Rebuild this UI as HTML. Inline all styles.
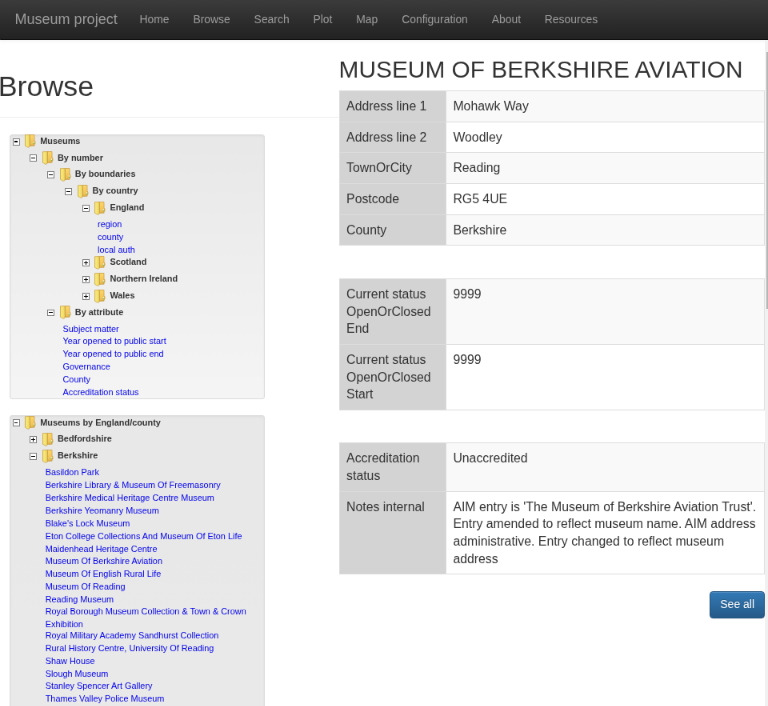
<!DOCTYPE html>
<html>
<head>
<meta charset="utf-8">
<title>Museum project</title>
<style>
*{box-sizing:border-box;}
html,body{margin:0;padding:0;width:768px;height:706px;overflow:hidden;background:#fff;}
body{font-family:"Liberation Sans",sans-serif;color:#333;position:relative;}
#wrap{position:absolute;left:0;top:0;width:960px;height:884px;transform:scale(0.8);transform-origin:0 0;will-change:transform;font-size:14px;line-height:20px;overflow:hidden;}
/* navbar */
#nav{position:absolute;left:-2px;top:-1px;width:964px;height:51px;background:linear-gradient(to bottom,#3c3c3c 0,#222 100%);border-bottom:1px solid #0e0e0e;border-radius:0 0 0 4px;box-shadow:inset 0 1px 0 rgba(255,255,255,.15),0 1px 5px rgba(0,0,0,.075);white-space:nowrap;color:#9d9d9d;}
#nav .brand{position:absolute;left:20.6px;top:15px;font-size:18px;line-height:20px;}
#nav .links{position:absolute;left:161.6px;top:15px;font-size:13.92px;line-height:20px;}
#nav .links span{display:inline-block;padding:0 14.92px;}
/* left */
h1{position:absolute;left:-2.3px;top:89px;margin:0;font-size:35.8px;line-height:39.6px;font-weight:400;color:#333;}
#hr{position:absolute;left:0;top:146.1px;width:424px;height:1px;background:#eee;}
.well{position:absolute;left:12.25px;width:318.75px;background:linear-gradient(to bottom,#e8e8e8 0,#f5f5f5 100%);border:1px solid #dcdcdc;border-radius:3px;box-shadow:inset 0 1px 3px rgba(0,0,0,.05);}
.tree{position:absolute;left:0;top:-3px;width:316px;font-size:10.9px;white-space:nowrap;}
.tree .f{position:relative;height:20.8px;line-height:20.8px;color:#333;}
.tree .f b{position:absolute;top:0;margin-left:34.55px;font-weight:700;}
.tree .f i.e{position:absolute;top:6.9px;width:9px;height:8.9px;border:1.1px solid #7c7c7c;background:#fff;}
.tree .f i.e:before{content:"";position:absolute;left:1px;top:2.75px;width:4.8px;height:1.15px;background:#000;}
.tree .f i.e.p:after{content:"";position:absolute;left:2.8px;top:0.9px;width:1.2px;height:4.9px;background:#000;}
.tree .f .ic{position:absolute;top:2.7px;margin-left:15.55px;width:14px;height:17px;}
.tree .l{height:15.87px;line-height:15.87px;color:#0000ee;}
.tree .l span{position:relative;top:3.1px;display:block;}
#t2{top:-2.4px;}
#t2 .l span{top:3.5px;}
.tree .l.w{height:29.6px;}
.tree .l.w span{line-height:15.9px;margin-top:-0.4px;}
/* right */
h2{position:absolute;left:423.6px;top:69.8px;margin:0;font-size:29.87px;line-height:33px;font-weight:400;color:#333;white-space:nowrap;}
table{position:absolute;left:424.1px;width:531.5px;border-collapse:collapse;font-size:15.84px;line-height:21.65px;table-layout:fixed;}
td{border:1px solid #ddd;padding:8px;vertical-align:top;color:#333;white-space:nowrap;}
td.k{width:133.3px;background:#d3d3d3;}
tr.a td.v{background:#f9f9f9;}
tr.b td.v{background:#fff;}
#btn{position:absolute;left:886.9px;top:738.9px;width:69.6px;height:33.7px;border-radius:4px;border:1px solid #245580;background:linear-gradient(to bottom,#337ab7 0,#265a88 100%);box-shadow:inset 0 1px 0 rgba(255,255,255,.15),0 1px 1px rgba(0,0,0,.075);color:#fff;font-size:14px;line-height:31.7px;text-align:center;text-shadow:0 -1px 0 rgba(0,0,0,.2);}
#sbt{position:absolute;left:765.2px;top:40px;width:3px;height:670px;background:#f1f1f1;}
#sbh{position:absolute;left:765.9px;top:52px;width:2.1px;height:256.5px;background:linear-gradient(to right,#d2d2d2,#adadad);}
</style>
</head>
<body>
<div id="wrap">
  <div id="nav">
    <span class="brand">Museum project</span>
    <div class="links"><span>Home</span><span>Browse</span><span>Search</span><span>Plot</span><span>Map</span><span>Configuration</span><span>About</span><span>Resources</span></div>
  </div>

  <h1>Browse</h1>
  <div id="hr"></div>

  <div class="well" style="top:167.75px;height:331px;"><div class="tree">
<div class="f" style="padding-left:2.4px"><i class="e"></i><svg class="ic" viewBox="0 0 14 17"><use href="#fold"/></svg><b>Museums</b></div>
<div class="f" style="padding-left:24.2px"><i class="e"></i><svg class="ic" viewBox="0 0 14 17"><use href="#fold"/></svg><b>By number</b></div>
<div class="f" style="padding-left:46px"><i class="e"></i><svg class="ic" viewBox="0 0 14 17"><use href="#fold"/></svg><b>By boundaries</b></div>
<div class="f" style="padding-left:67.8px"><i class="e"></i><svg class="ic" viewBox="0 0 14 17"><use href="#fold"/></svg><b>By country</b></div>
<div class="f" style="padding-left:89.6px"><i class="e"></i><svg class="ic" viewBox="0 0 14 17"><use href="#fold"/></svg><b>England</b></div>
<div class="l" style="padding-left:108.85px"><span>region</span></div>
<div class="l" style="padding-left:108.85px"><span>county</span></div>
<div class="l" style="padding-left:108.85px"><span>local auth</span></div>
<div class="f" style="padding-left:89.6px"><i class="e p"></i><svg class="ic" viewBox="0 0 14 17"><use href="#fold"/></svg><b>Scotland</b></div>
<div class="f" style="padding-left:89.6px"><i class="e p"></i><svg class="ic" viewBox="0 0 14 17"><use href="#fold"/></svg><b>Northern Ireland</b></div>
<div class="f" style="padding-left:89.6px"><i class="e p"></i><svg class="ic" viewBox="0 0 14 17"><use href="#fold"/></svg><b>Wales</b></div>
<div class="f" style="padding-left:46px"><i class="e"></i><svg class="ic" viewBox="0 0 14 17"><use href="#fold"/></svg><b>By attribute</b></div>
<div class="l" style="padding-left:65.25px"><span>Subject matter</span></div>
<div class="l" style="padding-left:65.25px"><span>Year opened to public start</span></div>
<div class="l" style="padding-left:65.25px"><span>Year opened to public end</span></div>
<div class="l" style="padding-left:65.25px"><span>Governance</span></div>
<div class="l" style="padding-left:65.25px"><span>County</span></div>
<div class="l" style="padding-left:65.25px"><span>Accreditation status</span></div>
  </div></div>

  <div class="well" style="top:518.9px;height:3200px;"><div class="tree" id="t2">
<div class="f" style="padding-left:2.4px"><i class="e"></i><svg class="ic" viewBox="0 0 14 17"><use href="#fold"/></svg><b>Museums by England/county</b></div>
<div class="f" style="padding-left:24.2px"><i class="e p"></i><svg class="ic" viewBox="0 0 14 17"><use href="#fold"/></svg><b>Bedfordshire</b></div>
<div class="f" style="padding-left:24.2px"><i class="e"></i><svg class="ic" viewBox="0 0 14 17"><use href="#fold"/></svg><b>Berkshire</b></div>
<div class="l" style="padding-left:43.45px"><span>Basildon Park</span></div>
<div class="l" style="padding-left:43.45px"><span>Berkshire Library &amp; Museum Of Freemasonry</span></div>
<div class="l" style="padding-left:43.45px"><span>Berkshire Medical Heritage Centre Museum</span></div>
<div class="l" style="padding-left:43.45px"><span>Berkshire Yeomanry Museum</span></div>
<div class="l" style="padding-left:43.45px"><span>Blake's Lock Museum</span></div>
<div class="l" style="padding-left:43.45px"><span>Eton College Collections And Museum Of Eton Life</span></div>
<div class="l" style="padding-left:43.45px"><span>Maidenhead Heritage Centre</span></div>
<div class="l" style="padding-left:43.45px"><span>Museum Of Berkshire Aviation</span></div>
<div class="l" style="padding-left:43.45px"><span>Museum Of English Rural Life</span></div>
<div class="l" style="padding-left:43.45px"><span>Museum Of Reading</span></div>
<div class="l" style="padding-left:43.45px"><span>Reading Museum</span></div>
<div class="l w" style="padding-left:43.45px"><span>Royal Borough Museum Collection &amp; Town &amp; Crown<br>Exhibition</span></div>
<div class="l" style="padding-left:43.45px"><span>Royal Military Academy Sandhurst Collection</span></div>
<div class="l" style="padding-left:43.45px"><span>Rural History Centre, University Of Reading</span></div>
<div class="l" style="padding-left:43.45px"><span>Shaw House</span></div>
<div class="l" style="padding-left:43.45px"><span>Slough Museum</span></div>
<div class="l" style="padding-left:43.45px"><span>Stanley Spencer Art Gallery</span></div>
<div class="l" style="padding-left:43.45px"><span>Thames Valley Police Museum</span></div>
  </div></div>

  <h2>MUSEUM OF BERKSHIRE AVIATION</h2>

  <table style="top:113.1px">
    <tr class="a"><td class="k">Address line 1</td><td class="v">Mohawk Way</td></tr>
    <tr class="b"><td class="k">Address line 2</td><td class="v">Woodley</td></tr>
    <tr class="a"><td class="k">TownOrCity</td><td class="v">Reading</td></tr>
    <tr class="b"><td class="k">Postcode</td><td class="v">RG5 4UE</td></tr>
    <tr class="a"><td class="k">County</td><td class="v">Berkshire</td></tr>
  </table>

  <table style="top:347.9px">
    <tr class="a"><td class="k">Current status<br>OpenOrClosed<br>End</td><td class="v">9999</td></tr>
    <tr class="b"><td class="k">Current status<br>OpenOrClosed<br>Start</td><td class="v">9999</td></tr>
  </table>

  <table style="top:553.4px">
    <tr class="a"><td class="k">Accreditation<br>status</td><td class="v">Unaccredited</td></tr>
    <tr class="b"><td class="k">Notes internal</td><td class="v">AIM entry is 'The Museum of Berkshire Aviation Trust'.<br>Entry amended to reflect museum name. AIM address<br>administrative. Entry changed to reflect museum<br>address</td></tr>
  </table>

  <div id="btn">See all</div>
</div>
<div id="sbt"></div><div id="sbh"></div>

<svg width="0" height="0" style="position:absolute">
  <defs>
    <linearGradient id="fg1" x1="0" y1="0" x2="1" y2="0"><stop offset="0" stop-color="#d9b348"/><stop offset=".2" stop-color="#f8ec7a"/><stop offset=".75" stop-color="#f0da6a"/><stop offset="1" stop-color="#dcb952"/></linearGradient>
    <linearGradient id="fg2" x1="0" y1="0" x2="0" y2="1"><stop offset="0" stop-color="#eecb6c"/><stop offset=".12" stop-color="#fcd468"/><stop offset=".8" stop-color="#f0c158"/><stop offset="1" stop-color="#d9ab49"/></linearGradient>
    <g id="fold">
      <path d="M12 7.8 Q13.7 8 13.6 10.4 Q13.5 12.8 12 12.8 Z" fill="#d9ae50"/>
      <path d="M6.2 0.5 L12 0.5 L12.1 14.2 L6.2 14.4 Z" fill="url(#fg2)" stroke="#c89b3e" stroke-width=".7"/>
      <path d="M0.4 0.7 L6.4 0.5 L6.5 14.9 L4.3 16.5 L0.4 14.2 Z" fill="url(#fg1)" stroke="#c99f3f" stroke-width=".7"/>
      <circle cx="11.5" cy="11.1" r=".85" fill="#5abf48"/>
      <circle cx="11.5" cy="10.1" r=".8" fill="#fffff6"/>
    </g>
  </defs>
</svg>
</body>
</html>
